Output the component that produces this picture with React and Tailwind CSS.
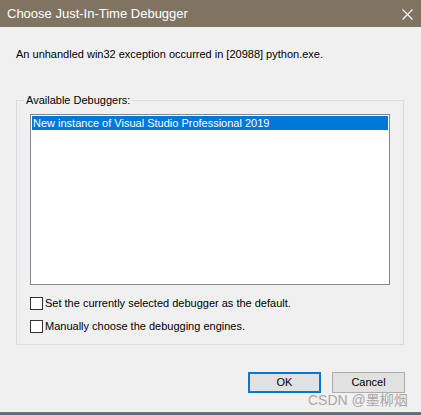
import React from "react";

const font = { fontFamily: '"Liberation Sans", "Noto Sans CJK SC", sans-serif' };

function CheckRow({ label }) {
  return (
    <label className="flex items-center gap-[2px] h-[13px]">
      <span className="w-[13px] h-[13px] border border-[#333333] bg-white shrink-0" />
      <span className="text-[11px] leading-[13px] text-black">{label}</span>
    </label>
  );
}

export default function App() {
  return (
    <div className="w-[421px] h-[415px] flex flex-col bg-[#f0f0f0] overflow-hidden" style={font}>
      {/* caption bar */}
      <div className="h-[27px] shrink-0 bg-[#7f7461] flex items-center justify-between pl-[7px] pr-[8px]">
        <span className="text-white text-[13px] leading-none">Choose Just-In-Time Debugger</span>
        <svg width="11" height="11" viewBox="0 0 11 11" className="mt-[1px]">
          <path d="M0.5 0.5 L10.5 10.5 M10.5 0.5 L0.5 10.5" stroke="#ffffff" strokeWidth="1.1" />
        </svg>
      </div>

      <div className="flex-1 flex flex-col px-[16px]">
        <p className="mt-[20px] text-[11px] leading-[14px] text-black">
          An unhandled win32 exception occurred in [20988] python.exe.
        </p>

        {/* group box */}
        <div className="relative mt-[39px] h-[245px] mr-[1px] border border-[#dcdcdc] px-[13px] pt-[13px]">
          <span className="absolute -top-[8px] left-[7px] px-[2px] bg-[#f0f0f0] text-[11px] leading-[14px] text-black">
            Available Debuggers:
          </span>
          <div className="h-[171px] border border-[#828790] bg-white p-[1px]">
            <div className="h-[14px] bg-[#0078d7] text-white text-[11px] leading-[14px] pl-[1px]">
              New instance of Visual Studio Professional 2019
            </div>
          </div>
          <div className="mt-[12px] flex flex-col gap-[10px]">
            <CheckRow label="Set the currently selected debugger as the default." />
            <CheckRow label="Manually choose the debugging engines." />
          </div>
        </div>

        <div className="mt-[27px] flex items-start justify-end gap-[11px]">
          <button className="block w-[73px] h-[21px] border-2 border-[#0078d7] bg-[#e1e1e1] text-[11px] text-black leading-none">
            OK
          </button>
          <div className="relative">
            <button className="block w-[73px] h-[21px] border border-[#adadad] bg-[#e1e1e1] text-[11px] text-black leading-none">
              Cancel
            </button>
            <span className="absolute top-[20px] -left-[24px] whitespace-nowrap text-[14px] leading-[16px] text-[#a8a8a8]">
              CSDN @墨柳烟
            </span>
          </div>
        </div>
      </div>

      {/* taskbar edge */}
      <div className="h-[1px] bg-[#7f7461] shrink-0" />
      <div className="h-[2px] bg-[#5b6b83] shrink-0" />
    </div>
  );
}
